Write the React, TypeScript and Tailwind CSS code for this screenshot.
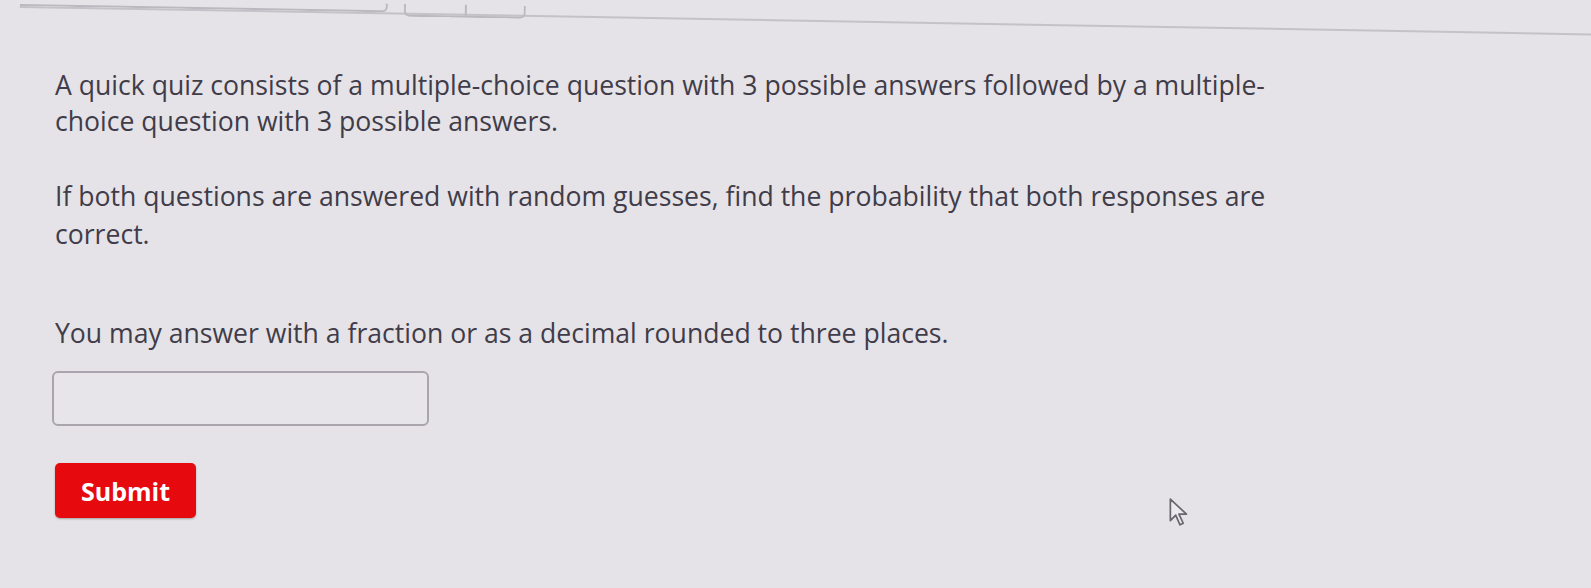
import React from "react";

export default function App() {
  return (
    <div
      className="w-[1591px] h-[588px] overflow-hidden bg-[#e5e3e7] text-[#413c49] relative"
      style={{ fontFamily: '"Open Sans", "Noto Sans", sans-serif' }}
    >
      <div className="h-[11px] -mt-[3px] border-b-2 border-[#c4c1c8] ml-[20px] w-[1620px] flex items-start gap-[16px] origin-top-left rotate-[1deg]">
        <div className="w-[368px] h-[9px] border-b-2 border-r-2 border-[#bbb8bf] rounded-br-[6px]" />
        <div className="w-[122px] h-[13px] border-2 border-t-0 border-[#bbb8bf] rounded-b-[6px] flex">
          <div className="w-[61px] border-r-2 border-[#bbb8bf]" />
        </div>
      </div>
      <div className="pl-[55px] pt-[59px] text-[26.6px] font-medium leading-[36px]">
        <p>
          A quick quiz consists of a multiple-choice question with 3 possible answers followed by a multiple-
          <br />
          choice question with 3 possible answers.
        </p>
        <p className="mt-[38px] leading-[38px]">
          If both questions are answered with random guesses, find the probability that both responses are
          <br />
          correct.
        </p>
        <p className="mt-[62px]">You may answer with a fraction or as a decimal rounded to three places.</p>
        <input
          type="text"
          className="block mt-[20px] -ml-[3px] w-[377px] h-[55px] rounded-[6px] border-2 border-[#a9a4ae] bg-[#e7e5e9] outline-none"
        />
        <button className="block mt-[37px] w-[141px] h-[55px] rounded-[5px] bg-[#e60a0f] text-white font-bold text-[25px] shadow-[0_1px_2px_rgba(0,0,0,0.3)]">
          Submit
        </button>
      </div>
      <svg className="absolute left-[1168px] top-[497px]" width="24" height="30" viewBox="0 0 22 28">
        <path
          d="M2 2 L2 22 L7 17 L11 26 L14 24.5 L10 16 L17 16 Z"
          fill="#eceaee"
          stroke="#6a6670"
          strokeWidth="1.6"
          strokeLinejoin="round"
        />
      </svg>
    </div>
  );
}
